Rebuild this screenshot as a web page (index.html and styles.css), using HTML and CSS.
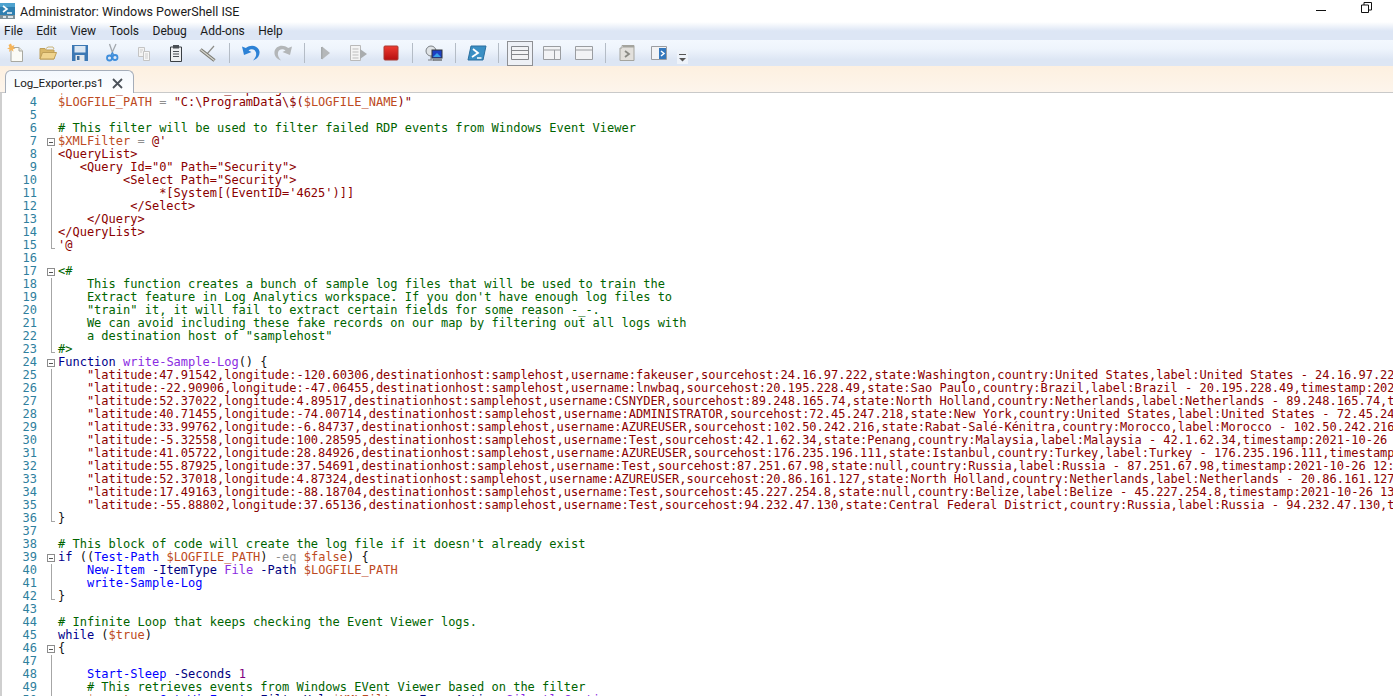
FILE: index.html
```html
<!DOCTYPE html>
<html lang="en">
<head>
    <meta charset="UTF-8">
    <meta name="viewport" content="width=device-width, initial-scale=1.0">
    <title>Administrator: Windows PowerShell ISE</title>
    <link rel="stylesheet" href="styles.css">
</head>
<body>
    <div class="title-bar">
        <svg class="app-icon" width="16" height="16" viewBox="0 0 16 16">
            <rect x="0" y="0" width="15" height="12" fill="#2f7fb0"/>
            <path d="M0 0h15v4H0z" fill="#4fa3cf"/>
            <rect x="0" y="12" width="15" height="4" fill="#7d9098"/>
            <rect x="3" y="13" width="3" height="2" fill="#d9e2e6"/>
            <rect x="8" y="13" width="5" height="2" fill="#d9e2e6"/>
            <path d="M3 3l4 3-4 3" fill="none" stroke="#fff" stroke-width="1.6"/>
            <path d="M7 10h5" stroke="#fff" stroke-width="1.4"/>
        </svg>
        <div class="title-text">Administrator: Windows PowerShell ISE</div>
        <div class="window-buttons">
            <svg width="11" height="11" viewBox="0 0 11 11"><path d="M0 8.5h10" stroke="#111" stroke-width="1"/></svg>
            <svg width="11" height="11" viewBox="0 0 11 11"><path d="M.5 3h7v7.500h-7zM3 3V.5h7.500V8H7.500" fill="none" stroke="#111" stroke-width="1"/></svg>
        </div>
    </div>

    <div class="menu-bar">
        <span>File</span>
        <span>Edit</span>
        <span>View</span>
        <span>Tools</span>
        <span>Debug</span>
        <span>Add-ons</span>
        <span>Help</span>
    </div>

    <div class="tool-bar">
        <div class="tool">
            <svg width="20" height="20" viewBox="0 0 20 20">
                <path d="M5 4.500h8l3.500 3.500v10.500H5z" fill="#fbfbf6" stroke="#a8a8a0"/>
                <path d="M13 4.500V8h3.500" fill="#e6e6de" stroke="#a8a8a0"/>
                <path d="M5 .5l1 2.500 2.500-1-1 2.500 2 1-2.500.7.500 2.500-2.200-1.700L3 9l.5-2.700L1 5.500l2.500-1L2.500 2z" fill="#f5b45a"/>
            </svg>
        </div>
        <div class="tool">
            <svg width="20" height="20" viewBox="0 0 20 20">
                <path d="M2 16V5.500h5l1.500 1.500H16v9z" fill="#d9b768" stroke="#bf9f58"/>
                <path d="M2 16l2.500-6.500h14L16 16z" fill="#f0d48e" stroke="#bf9f58"/>
                <path d="M8 5.500l2-1.500h5l1 2" fill="none" stroke="#c8b37a"/>
            </svg>
        </div>
        <div class="tool">
            <svg width="20" height="20" viewBox="0 0 20 20">
                <path d="M2 2h16v16H2z" fill="#3c78b4"/>
                <rect x="4.500" y="3" width="11" height="6.500" fill="#dbe7f3"/>
                <rect x="5.500" y="12" width="9" height="6" fill="#e4e8ec"/>
                <rect x="7" y="13" width="2.500" height="4" fill="#3c6c9c"/>
            </svg>
        </div>
        <div class="tool">
            <svg width="20" height="20" viewBox="0 0 20 20">
                <path d="M14 1l-4.500 10M7.500 1L11 11" stroke="#a3a8ae" stroke-width="1.300" fill="none"/>
                <circle cx="7.500" cy="15" r="2.500" fill="none" stroke="#3f8edb" stroke-width="1.800"/>
                <circle cx="13" cy="14.500" r="2.500" fill="none" stroke="#3f8edb" stroke-width="1.800"/>
                <path d="M9 12l1.500-2 1 2" fill="none" stroke="#3f8edb" stroke-width="1.300"/>
            </svg>
        </div>
        <div class="tool">
            <svg width="20" height="20" viewBox="0 0 20 20">
                <path d="M4.500 4.500h6v9h-6z" fill="#f3f3f3" stroke="#c4c4c4"/>
                <path d="M9.500 8.500h6v9h-6z" fill="#f7f7f7" stroke="#c4c4c4"/>
                <path d="M11 11h3M11 13h3M11 15h3M6 7h3M6 9h2" stroke="#cdcdcd"/>
            </svg>
        </div>
        <div class="tool">
            <svg width="20" height="20" viewBox="0 0 20 20">
                <path d="M4.500 4h11v14.500h-11z" fill="#eef0f2" stroke="#3a3f44"/>
                <rect x="7" y="2" width="6" height="3.500" fill="#4a4f55"/>
                <path d="M7 8.500h6M7 11h6M7 13.500h6" stroke="#4a4f55"/>
            </svg>
        </div>
        <div class="tool">
            <svg width="20" height="20" viewBox="0 0 20 20">
                <path d="M16 3l-7 8" stroke="#8c8c88" stroke-width="1.200"/>
                <path d="M2.500 6.500l14 11" stroke="#77776f" stroke-width="3.400"/>
                <path d="M2.500 6.500l14 11" stroke="#d2d2cc" stroke-width="1.400"/>
            </svg>
        </div>
        <div class="sep"></div>
        <div class="tool">
            <svg width="20" height="20" viewBox="0 0 20 20">
                <path d="M1 3.500L3 12l7.500-3-3-1.500C10 5.500 14 6 15 9.500c.7 2.800-.7 5.500-3 8 4.500-1.500 7-5 6.500-9C17.500 3 10.500.5 4.800 5z" fill="#2d82d6"/>
            </svg>
        </div>
        <div class="tool">
            <svg width="20" height="20" viewBox="0 0 20 20">
                <path d="M19 3.500L17 12l-7.500-3 3-1.500C10 5.500 6 6 5 9.500c-.7 2.800.7 5.500 3 8-4.500-1.500-7-5-6.500-9C2.500 3 9.500.5 15.200 5z" fill="#b3b6b8"/>
            </svg>
        </div>
        <div class="sep"></div>
        <div class="tool">
            <svg width="20" height="20" viewBox="0 0 20 20">
                <path d="M6 3.500L14 10l-8 6.500z" fill="#b5b8ba"/>
                <rect x="5" y="4" width="1.500" height="12" fill="#a6aaac"/>
            </svg>
        </div>
        <div class="tool">
            <svg width="20" height="20" viewBox="0 0 20 20">
                <path d="M2.500 2.500h10v15h-10z" fill="#f4f4f4" stroke="#b9b9b9"/>
                <path d="M4.500 6h6M4.500 9h6M4.500 12h6M4.500 15h6" stroke="#bdbdbd"/>
                <path d="M12 6l7 5-7 5z" fill="#a9acae"/>
            </svg>
        </div>
        <div class="tool tool-stop">
            <svg width="20" height="20" viewBox="0 0 20 20">
                <defs>
                    <linearGradient id="stopFill" x1="0" y1="0" x2="0" y2="1">
                        <stop offset="0" stop-color="#ee3a30"/>
                        <stop offset="1" stop-color="#b50f10"/>
                    </linearGradient>
                </defs>
                <rect x="3" y="3" width="14" height="14" rx="1" fill="url(#stopFill)" stroke="#a83a32"/>
            </svg>
        </div>
        <div class="sep"></div>
        <div class="tool">
            <svg width="20" height="20" viewBox="0 0 20 20">
                <circle cx="7" cy="8" r="5" fill="#dfe3e6" stroke="#7a7f84"/>
                <path d="M7 13v4M4 17h6" stroke="#7a7f84"/>
                <rect x="8" y="7" width="10" height="8" fill="#1c3fc2" stroke="#31343a"/>
                <path d="M9 14l4-4 4 4" fill="#3aa0e8"/>
                <path d="M9 17h9" stroke="#6d7074" stroke-width="1.500"/>
            </svg>
        </div>
        <div class="sep"></div>
        <div class="tool">
            <svg width="20" height="20" viewBox="0 0 20 20">
                <path d="M4 3h15l-3 14H1z" fill="#3a8fc4" stroke="#2a6f9f"/>
                <path d="M6 6l5 4-6 4" fill="none" stroke="#fff" stroke-width="1.800"/>
                <path d="M10 15h4.500" stroke="#fff" stroke-width="1.500"/>
            </svg>
        </div>
        <div class="sep"></div>
        <div class="tool tool-selected">
            <svg width="20" height="18" viewBox="0 0 20 18">
                <path d="M1.500 2.500h17v13h-17zM1.500 6.500h17M1.500 10.500h17" fill="#f2f3f5" stroke="#85888c"/>
            </svg>
        </div>
        <div class="tool">
            <svg width="20" height="18" viewBox="0 0 20 18">
                <path d="M1.500 2.500h17v13h-17zM1.500 6h17M12.500 6v9.500" fill="#f2f3f5" stroke="#9a9da1"/>
            </svg>
        </div>
        <div class="tool">
            <svg width="20" height="18" viewBox="0 0 20 18">
                <path d="M1.500 2.500h17v13h-17zM1.500 6h17" fill="#f2f3f5" stroke="#9a9da1"/>
            </svg>
        </div>
        <div class="sep"></div>
        <div class="tool">
            <svg width="20" height="20" viewBox="0 0 20 20">
                <path d="M5 2.500h12v15H3V5h2z" fill="#e2e0dc" stroke="#a4a49e"/>
                <rect x="6" y="2" width="11" height="2.500" fill="#a4a49e"/>
                <path d="M8 8l4 3-4 3" fill="none" stroke="#8a8a84" stroke-width="1.800"/>
            </svg>
        </div>
        <div class="tool">
            <svg width="20" height="20" viewBox="0 0 20 20">
                <path d="M2.500 3.500h15v13h-15z" fill="#f2f3f5" stroke="#9a9da1"/>
                <rect x="10" y="5" width="7" height="11" fill="#3478bd"/>
                <path d="M12 8l3 2.500-3 2.500" fill="none" stroke="#fff" stroke-width="1.500"/>
            </svg>
        </div>
        <div class="overflow">
            <svg width="7" height="9" viewBox="0 0 7 9">
                <path d="M0 1.500h7" stroke="#555"/>
                <path d="M0 5h7l-3.500 3.500z" fill="#555"/>
            </svg>
        </div>
    </div>

    <div class="tab-strip">
        <div class="tab">
            <span>Log_Exporter.ps1</span>
            <svg width="11" height="11" viewBox="0 0 11 11"><path d="M1 1l9 9M10 1l-9 9" stroke="#4c525a" stroke-width="1.800"/></svg>
        </div>
    </div>

    <div class="editor">
        <div class="lines">
            <div class="line"><span class="num">3</span><span class="fold"></span><code><i class="v">$LOGFILE_NAME</i> <i class="o">=</i> <i class="s">"failed_rdp.log"</i></code></div>
            <div class="line"><span class="num">4</span><span class="fold"></span><code><i class="v">$LOGFILE_PATH</i> <i class="o">=</i> <i class="s">"C:\ProgramData\$(</i><i class="v">$LOGFILE_NAME</i><i class="s">)"</i></code></div>
            <div class="line"><span class="num">5</span><span class="fold"></span><code></code></div>
            <div class="line"><span class="num">6</span><span class="fold"></span><code><i class="c"># This filter will be used to filter failed RDP events from Windows Event Viewer</i></code></div>
            <div class="line"><span class="num">7</span><span class="fold open"></span><code><i class="v">$XMLFilter</i> <i class="o">=</i> <i class="s">@'</i></code></div>
            <div class="line"><span class="num">8</span><span class="fold bar"></span><code><i class="s">&lt;QueryList&gt;</i></code></div>
            <div class="line"><span class="num">9</span><span class="fold bar"></span><code><i class="s">   &lt;Query Id="0" Path="Security"&gt;</i></code></div>
            <div class="line"><span class="num">10</span><span class="fold bar"></span><code><i class="s">         &lt;Select Path="Security"&gt;</i></code></div>
            <div class="line"><span class="num">11</span><span class="fold bar"></span><code><i class="s">              *[System[(EventID='4625')]]</i></code></div>
            <div class="line"><span class="num">12</span><span class="fold bar"></span><code><i class="s">          &lt;/Select&gt;</i></code></div>
            <div class="line"><span class="num">13</span><span class="fold bar"></span><code><i class="s">    &lt;/Query&gt;</i></code></div>
            <div class="line"><span class="num">14</span><span class="fold bar"></span><code><i class="s">&lt;/QueryList&gt;</i></code></div>
            <div class="line"><span class="num">15</span><span class="fold end"></span><code><i class="s">'@</i></code></div>
            <div class="line"><span class="num">16</span><span class="fold"></span><code></code></div>
            <div class="line"><span class="num">17</span><span class="fold open"></span><code><i class="c">&lt;#</i></code></div>
            <div class="line"><span class="num">18</span><span class="fold bar"></span><code><i class="c">    This function creates a bunch of sample log files that will be used to train the</i></code></div>
            <div class="line"><span class="num">19</span><span class="fold bar"></span><code><i class="c">    Extract feature in Log Analytics workspace. If you don't have enough log files to</i></code></div>
            <div class="line"><span class="num">20</span><span class="fold bar"></span><code><i class="c">    "train" it, it will fail to extract certain fields for some reason -_-.</i></code></div>
            <div class="line"><span class="num">21</span><span class="fold bar"></span><code><i class="c">    We can avoid including these fake records on our map by filtering out all logs with</i></code></div>
            <div class="line"><span class="num">22</span><span class="fold bar"></span><code><i class="c">    a destination host of "samplehost"</i></code></div>
            <div class="line"><span class="num">23</span><span class="fold end"></span><code><i class="c">#&gt;</i></code></div>
            <div class="line"><span class="num">24</span><span class="fold open"></span><code><i class="k">Function</i> <i class="a">write-Sample-Log</i><i class="p">() {</i></code></div>
            <div class="line"><span class="num">25</span><span class="fold bar"></span><code><i class="s">    "latitude:47.91542,longitude:-120.60306,destinationhost:samplehost,username:fakeuser,sourcehost:24.16.97.222,state:Washington,country:United States,label:United States - 24.16.97.222</i></code></div>
            <div class="line"><span class="num">26</span><span class="fold bar"></span><code><i class="s">    "latitude:-22.90906,longitude:-47.06455,destinationhost:samplehost,username:lnwbaq,sourcehost:20.195.228.49,state:Sao Paulo,country:Brazil,label:Brazil - 20.195.228.49,timestamp:2021</i></code></div>
            <div class="line"><span class="num">27</span><span class="fold bar"></span><code><i class="s">    "latitude:52.37022,longitude:4.89517,destinationhost:samplehost,username:CSNYDER,sourcehost:89.248.165.74,state:North Holland,country:Netherlands,label:Netherlands - 89.248.165.74,timestamp</i></code></div>
            <div class="line"><span class="num">28</span><span class="fold bar"></span><code><i class="s">    "latitude:40.71455,longitude:-74.00714,destinationhost:samplehost,username:ADMINISTRATOR,sourcehost:72.45.247.218,state:New York,country:United States,label:United States - 72.45.247.218</i></code></div>
            <div class="line"><span class="num">29</span><span class="fold bar"></span><code><i class="s">    "latitude:33.99762,longitude:-6.84737,destinationhost:samplehost,username:AZUREUSER,sourcehost:102.50.242.216,state:Rabat-Salé-Kénitra,country:Morocco,label:Morocco - 102.50.242.216,timestamp</i></code></div>
            <div class="line"><span class="num">30</span><span class="fold bar"></span><code><i class="s">    "latitude:-5.32558,longitude:100.28595,destinationhost:samplehost,username:Test,sourcehost:42.1.62.34,state:Penang,country:Malaysia,label:Malaysia - 42.1.62.34,timestamp:2021-10-26 </i></code></div>
            <div class="line"><span class="num">31</span><span class="fold bar"></span><code><i class="s">    "latitude:41.05722,longitude:28.84926,destinationhost:samplehost,username:AZUREUSER,sourcehost:176.235.196.111,state:Istanbul,country:Turkey,label:Turkey - 176.235.196.111,timestamp:2021</i></code></div>
            <div class="line"><span class="num">32</span><span class="fold bar"></span><code><i class="s">    "latitude:55.87925,longitude:37.54691,destinationhost:samplehost,username:Test,sourcehost:87.251.67.98,state:null,country:Russia,label:Russia - 87.251.67.98,timestamp:2021-10-26 12:</i></code></div>
            <div class="line"><span class="num">33</span><span class="fold bar"></span><code><i class="s">    "latitude:52.37018,longitude:4.87324,destinationhost:samplehost,username:AZUREUSER,sourcehost:20.86.161.127,state:North Holland,country:Netherlands,label:Netherlands - 20.86.161.127,timestamp</i></code></div>
            <div class="line"><span class="num">34</span><span class="fold bar"></span><code><i class="s">    "latitude:17.49163,longitude:-88.18704,destinationhost:samplehost,username:Test,sourcehost:45.227.254.8,state:null,country:Belize,label:Belize - 45.227.254.8,timestamp:2021-10-26 13</i></code></div>
            <div class="line"><span class="num">35</span><span class="fold bar"></span><code><i class="s">    "latitude:-55.88802,longitude:37.65136,destinationhost:samplehost,username:Test,sourcehost:94.232.47.130,state:Central Federal District,country:Russia,label:Russia - 94.232.47.130,timestamp</i></code></div>
            <div class="line"><span class="num">36</span><span class="fold end"></span><code><i class="p">}</i></code></div>
            <div class="line"><span class="num">37</span><span class="fold"></span><code></code></div>
            <div class="line"><span class="num">38</span><span class="fold"></span><code><i class="c"># This block of code will create the log file if it doesn't already exist</i></code></div>
            <div class="line"><span class="num">39</span><span class="fold open"></span><code><i class="k">if</i> <i class="p">((</i><i class="f">Test-Path</i> <i class="v">$LOGFILE_PATH</i><i class="p">)</i> <i class="o">-eq</i> <i class="v">$false</i><i class="p">) {</i></code></div>
            <div class="line"><span class="num">40</span><span class="fold bar"></span><code>    <i class="f">New-Item</i> <i class="n">-ItemType</i> <i class="a">File</i> <i class="n">-Path</i> <i class="v">$LOGFILE_PATH</i></code></div>
            <div class="line"><span class="num">41</span><span class="fold bar"></span><code>    <i class="f">write-Sample-Log</i></code></div>
            <div class="line"><span class="num">42</span><span class="fold end"></span><code><i class="p">}</i></code></div>
            <div class="line"><span class="num">43</span><span class="fold"></span><code></code></div>
            <div class="line"><span class="num">44</span><span class="fold"></span><code><i class="c"># Infinite Loop that keeps checking the Event Viewer logs.</i></code></div>
            <div class="line"><span class="num">45</span><span class="fold"></span><code><i class="k">while</i> <i class="p">(</i><i class="v">$true</i><i class="p">)</i></code></div>
            <div class="line"><span class="num">46</span><span class="fold open"></span><code><i class="p">{</i></code></div>
            <div class="line"><span class="num">47</span><span class="fold bar"></span><code></code></div>
            <div class="line"><span class="num">48</span><span class="fold bar"></span><code>    <i class="f">Start-Sleep</i> <i class="n">-Seconds</i> <i class="m">1</i></code></div>
            <div class="line"><span class="num">49</span><span class="fold bar"></span><code><i class="c">    # This retrieves events from Windows EVent Viewer based on the filter</i></code></div>
            <div class="line"><span class="num">50</span><span class="fold bar"></span><code>    <i class="v">$events</i> <i class="o">=</i> <i class="f">Get-WinEvent</i> <i class="n">-FilterXml</i> <i class="v">$XMLFilter</i> <i class="n">-ErrorAction</i> <i class="a">SilentlyContinue</i></code></div>
        </div>
    </div>
</body>
</html>
```

FILE: styles.css
```css
html, body {
    height: 100%;
    margin: 0;
    overflow: hidden;
    background-color: white;
    font-family: 'Roboto', sans-serif;
    color: #1a1a1a;
}

body {
    display: flex;
    flex-direction: column;
}

.title-bar {
    height: 22px;
    flex: none;
    display: flex;
    align-items: center;
    background-color: white;
    font-size: 12.5px;
}

.app-icon {
    flex: none;
}

.title-text {
    margin-left: 4px;
    flex: 1;
}

.window-buttons {
    display: flex;
    gap: 34px;
    margin-right: 21px;
    margin-bottom: 7px;
}

.menu-bar {
    height: 18px;
    flex: none;
    display: flex;
    align-items: center;
    gap: 13.5px;
    padding-left: 4px;
    font-size: 12px;
    background: linear-gradient(#ffffff 0, #dde6f5 50%, #dde6f5 100%);
}

.tool-bar {
    height: 26px;
    flex: none;
    display: flex;
    align-items: center;
    background: linear-gradient(#f3f8fe 0, #eef4fc 35%, #dde6f4 75%, #dde6f4 100%);
}

.tool {
    width: 32px;
    height: 26px;
    flex: none;
    display: flex;
    align-items: center;
    justify-content: center;
    box-sizing: border-box;
}

.tool-stop {
    margin-left: 1px;
}

.tool-selected {
    height: 25px;
    width: 26px;
    margin: 0 3px;
    border: 1px solid #8e9094;
    background-color: #eef1f6;
}

.sep {
    width: 1px;
    height: 20px;
    flex: none;
    margin: 0 5px;
    background-color: #b4bcc6;
}

.overflow {
    width: 11px;
    height: 14px;
    margin: 8px 0 0 2px;
    display: flex;
    align-items: center;
    justify-content: center;
    background-color: #eef3fa;
}

.tab-strip {
    height: 27px;
    flex: none;
    box-sizing: border-box;
    padding: 4px 0 0 5px;
    border-bottom: 1px solid #c9c9c9;
    background: linear-gradient(#fdf0e0 0, #fdf5ec 100%);
}

.tab {
    width: 129px;
    height: 23px;
    box-sizing: border-box;
    display: flex;
    align-items: center;
    gap: 9px;
    padding: 2px 0 0 8px;
    border: 1px solid #a5adb9;
    border-bottom: none;
    border-radius: 6px 6px 0 0;
    background: linear-gradient(#f4f8fd 0, #ffffff 100%);
    font-size: 11.6px;
}

.tab span {
    width: 89px;
    white-space: nowrap;
}

.editor {
    flex: 1;
    overflow: hidden;
    border-left: 2px solid #cfcfcf;
}

.lines {
    margin-top: -10px;
}

.line {
    height: 13px;
    display: flex;
    font-family: 'DejaVu Sans Mono', monospace;
    font-size: 12px;
    line-height: 13px;
}

.num {
    width: 35px;
    flex: none;
    text-align: right;
    color: #2f7f9e;
}

.fold {
    width: 21px;
    flex: none;
    display: flex;
    box-sizing: border-box;
    padding-left: 11px;
}

.fold.open::before {
    content: "";
    width: 6px;
    height: 6px;
    margin: 3px 0 0 -1px;
    border: 1px solid #8c8c8c;
    background: linear-gradient(#555, #555) center / 4px 1px no-repeat;
}

.fold.bar::before {
    content: "";
    width: 1px;
    margin-left: 3px;
    background-color: #a6a6a6;
}

.fold.end::before {
    content: "";
    width: 3px;
    height: 9px;
    margin-left: 3px;
    border-left: 1px solid #a6a6a6;
    border-bottom: 1px solid #a6a6a6;
}

code {
    font-family: inherit;
    white-space: pre;
}

/* token colours, same as the ISE defaults */
i { font-style: normal; }
.v { color: #bd4a22; }
.s { color: #8b0000; }
.c { color: #006400; }
.o { color: #8f8f8f; }
.k { color: #00008b; }
.a { color: #8a2be2; }
.f { color: #0000ff; }
.n { color: #000080; }
.m { color: #800080; }
.p { color: #111111; }
```
